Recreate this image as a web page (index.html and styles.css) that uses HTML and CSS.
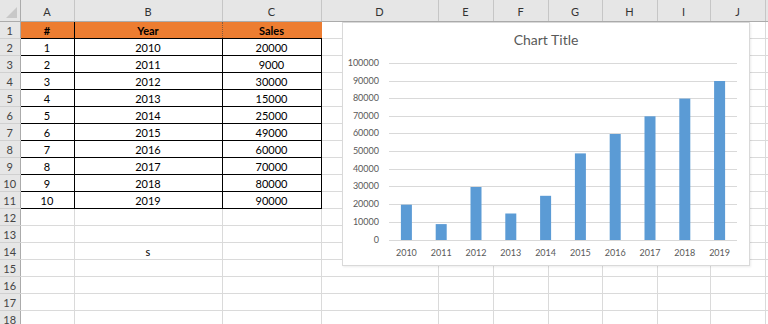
FILE: index.html
```html
<!DOCTYPE html>
<html lang="en">
<head>
  <meta charset="UTF-8">
  <title>Sales by Year</title>
  <link rel="stylesheet" href="styles.css">
</head>
<body>
  <table class="sheet">
    <colgroup>
      <col class="c-rn"><col class="c-a"><col class="c-b"><col class="c-c"><col class="c-d">
      <col class="c-e"><col class="c-f"><col class="c-g"><col class="c-h"><col class="c-i">
      <col class="c-j"><col class="c-k">
    </colgroup>
    <tr class="col-heads">
      <th class="corner"></th><th>A</th><th>B</th><th>C</th><th>D</th><th>E</th>
      <th>F</th><th>G</th><th>H</th><th>I</th><th>J</th><th></th>
    </tr>
    <tr>
      <th class="rn">1</th>
      <td class="head-cell sep">#</td><td class="head-cell dot">Year</td><td class="head-cell">Sales</td>
      <td></td><td></td><td></td><td></td><td></td><td></td><td></td><td></td>
    </tr>
    <tr>
      <th class="rn">2</th>
      <td class="t">1</td><td class="t">2010</td><td class="t">20000</td>
      <td></td><td></td><td></td><td></td><td></td><td></td><td></td><td></td>
    </tr>
    <tr>
      <th class="rn">3</th>
      <td class="t">2</td><td class="t">2011</td><td class="t">9000</td>
      <td></td><td></td><td></td><td></td><td></td><td></td><td></td><td></td>
    </tr>
    <tr>
      <th class="rn">4</th>
      <td class="t">3</td><td class="t">2012</td><td class="t">30000</td>
      <td></td><td></td><td></td><td></td><td></td><td></td><td></td><td></td>
    </tr>
    <tr>
      <th class="rn">5</th>
      <td class="t">4</td><td class="t">2013</td><td class="t">15000</td>
      <td></td><td></td><td></td><td></td><td></td><td></td><td></td><td></td>
    </tr>
    <tr>
      <th class="rn">6</th>
      <td class="t">5</td><td class="t">2014</td><td class="t">25000</td>
      <td></td><td></td><td></td><td></td><td></td><td></td><td></td><td></td>
    </tr>
    <tr>
      <th class="rn">7</th>
      <td class="t">6</td><td class="t">2015</td><td class="t">49000</td>
      <td></td><td></td><td></td><td></td><td></td><td></td><td></td><td></td>
    </tr>
    <tr>
      <th class="rn">8</th>
      <td class="t">7</td><td class="t">2016</td><td class="t">60000</td>
      <td></td><td></td><td></td><td></td><td></td><td></td><td></td><td></td>
    </tr>
    <tr>
      <th class="rn">9</th>
      <td class="t">8</td><td class="t">2017</td><td class="t">70000</td>
      <td></td><td></td><td></td><td></td><td></td><td></td><td></td><td></td>
    </tr>
    <tr>
      <th class="rn">10</th>
      <td class="t">9</td><td class="t">2018</td><td class="t">80000</td>
      <td></td><td></td><td></td><td></td><td></td><td></td><td></td><td></td>
    </tr>
    <tr>
      <th class="rn">11</th>
      <td class="t">10</td><td class="t">2019</td><td class="t">90000</td>
      <td></td><td></td><td></td><td></td><td></td><td></td><td></td><td></td>
    </tr>
    <tr>
      <th class="rn">12</th>
      <td></td><td></td><td></td><td></td><td></td><td></td><td></td><td></td><td></td><td></td><td></td>
    </tr>
    <tr>
      <th class="rn">13</th>
      <td></td><td></td><td></td><td></td><td></td><td></td><td></td><td></td><td></td><td></td><td></td>
    </tr>
    <tr>
      <th class="rn">14</th>
      <td></td><td>s</td><td></td><td></td><td></td><td></td><td></td><td></td><td></td><td></td><td></td>
    </tr>
    <tr>
      <th class="rn">15</th>
      <td></td><td></td><td></td><td></td><td></td><td></td><td></td><td></td><td></td><td></td><td></td>
    </tr>
    <tr>
      <th class="rn">16</th>
      <td></td><td></td><td></td><td></td><td></td><td></td><td></td><td></td><td></td><td></td><td></td>
    </tr>
    <tr>
      <th class="rn">17</th>
      <td></td><td></td><td></td><td></td><td></td><td></td><td></td><td></td><td></td><td></td><td></td>
    </tr>
    <tr>
      <th class="rn">18</th>
      <td></td><td></td><td></td><td></td><td></td><td></td><td></td><td></td><td></td><td></td><td></td>
    </tr>
  </table>

  <!-- chart floats over the sheet like an embedded Excel chart -->
  <div class="chart">
    <svg width="406" height="242" viewBox="0 0 406 242">
      <text class="chart-title" x="203" y="22">Chart Title</text>

      <g class="grid">
        <line x1="46" x2="394" y1="40.5" y2="40.5"/>
        <line x1="46" x2="394" y1="58.5" y2="58.5"/>
        <line x1="46" x2="394" y1="75.5" y2="75.5"/>
        <line x1="46" x2="394" y1="93.5" y2="93.5"/>
        <line x1="46" x2="394" y1="110.5" y2="110.5"/>
        <line x1="46" x2="394" y1="128.5" y2="128.5"/>
        <line x1="46" x2="394" y1="146.5" y2="146.5"/>
        <line x1="46" x2="394" y1="163.5" y2="163.5"/>
        <line x1="46" x2="394" y1="181.5" y2="181.5"/>
        <line x1="46" x2="394" y1="199.5" y2="199.5"/>
        <line x1="46" x2="394" y1="217.5" y2="217.5"/>
      </g>

      <g class="y-labels">
        <text x="36" y="43">100000</text>
        <text x="36" y="61">90000</text>
        <text x="36" y="78">80000</text>
        <text x="36" y="96">70000</text>
        <text x="36" y="113">60000</text>
        <text x="36" y="131">50000</text>
        <text x="36" y="149">40000</text>
        <text x="36" y="166">30000</text>
        <text x="36" y="184">20000</text>
        <text x="36" y="202">10000</text>
        <text x="36" y="220">0</text>
      </g>

      <g class="bars">
        <rect x="57.9" y="181.7" width="11" height="35.3"/>
        <rect x="92.7" y="201.1" width="11" height="15.9"/>
        <rect x="127.5" y="164" width="11" height="53"/>
        <rect x="162.3" y="190.5" width="11" height="26.5"/>
        <rect x="197.1" y="172.8" width="11" height="44.2"/>
        <rect x="231.9" y="130.4" width="11" height="86.6"/>
        <rect x="266.7" y="111" width="11" height="106"/>
        <rect x="301.5" y="93.3" width="11" height="123.7"/>
        <rect x="336.3" y="75.6" width="11" height="141.4"/>
        <rect x="371.1" y="58" width="11" height="159"/>
      </g>

      <g class="x-labels">
        <text x="63.4" y="233">2010</text>
        <text x="98.2" y="233">2011</text>
        <text x="133" y="233">2012</text>
        <text x="167.8" y="233">2013</text>
        <text x="202.6" y="233">2014</text>
        <text x="237.4" y="233">2015</text>
        <text x="272.2" y="233">2016</text>
        <text x="307" y="233">2017</text>
        <text x="341.8" y="233">2018</text>
        <text x="376.6" y="233">2019</text>
      </g>
    </svg>
  </div>
</body>
</html>
```

FILE: styles.css
```css
:root {
  --grid: #dadada;
  --head-bg: #e6e6e6;
  --head-line: #c6c6c6;
  --head-edge: #ababab;
  --orange: #ed7d31;
  --bar: #5b9bd5;
  --label: #595959;
}

* {
  margin: 0;
  padding: 0;
  box-sizing: border-box;
}

body {
  position: relative;
  width: 768px;
  height: 324px;
  overflow: hidden;
  background: #fff;
  font-family: Lato, 'Liberation Sans', sans-serif;
}

.sheet {
  border-collapse: collapse;
  table-layout: fixed;
  width: 785px;
  font-size: 11px;
  color: #000;
}

.c-rn { width: 20px; }
.c-a { width: 54px; }
.c-b { width: 148px; }
.c-c { width: 99px; }
.c-d { width: 117px; }
.c-e { width: 55px; }
.c-f { width: 55px; }
.c-g { width: 54px; }
.c-h { width: 55px; }
.c-i { width: 53px; }
.c-j { width: 55px; }
.c-k { width: 20px; }

.sheet tr {
  height: 17px;
}

.sheet td {
  height: 17px;
  line-height: 15px;
  padding-top: 1px;
  text-align: center;
  border-right: 1px solid var(--grid);
  border-bottom: 1px solid var(--grid);
  white-space: nowrap;
}

.col-heads {
  height: 21px;
}

.col-heads th {
  height: 21px;
  background: var(--head-bg);
  font-weight: normal;
  font-size: 11px;
  color: #333;
  padding-top: 2px;
  border-right: 1px solid var(--head-line);
  border-bottom: 1px solid var(--head-edge);
}

.col-heads .corner {
  position: relative;
  border-right: 1px solid var(--head-edge);
}

.corner::after {
  content: '';
  position: absolute;
  right: 3px;
  bottom: 3px;
  border-style: solid;
  border-width: 0 0 11px 11px;
  border-color: transparent transparent #c8c8c8 transparent;
}

.rn {
  background: var(--head-bg);
  font-weight: normal;
  font-size: 11px;
  line-height: 15px;
  color: #444;
  text-align: center;
  padding-top: 1px;
  border-right: 1px solid var(--head-edge);
  border-bottom: 1px solid #d0d0d0;
}

.sheet .head-cell {
  background: var(--orange);
  font-weight: bold;
  border-bottom: 1px solid #000;
  border-right: 1px solid var(--orange);
}

.sheet .head-cell.sep {
  border-right: 1px solid #000;
}

.sheet .head-cell.dot {
  border-right: 1px dotted #8a5a3a;
}

.sheet .t {
  border-right: 1px solid #000;
  border-bottom: 1px solid #000;
}

/* chart overlay */

.chart {
  position: absolute;
  left: 342px;
  top: 22px;
  width: 408px;
  height: 244px;
  background: #fff;
  border: 1px solid #d9d9d9;
  box-shadow: 1px 1px 2px rgba(0, 0, 0, 0.08);
}

.chart svg {
  display: block;
  font-family: Lato, 'Liberation Sans', sans-serif;
}

.chart-title {
  font-size: 14px;
  fill: var(--label);
  text-anchor: middle;
}

.grid line {
  stroke: #d9d9d9;
  stroke-width: 1;
  shape-rendering: crispEdges;
}

.y-labels text {
  font-size: 9px;
  fill: var(--label);
  text-anchor: end;
}

.x-labels text {
  font-size: 9px;
  fill: var(--label);
  text-anchor: middle;
}

.bars rect {
  fill: var(--bar);
}
```
